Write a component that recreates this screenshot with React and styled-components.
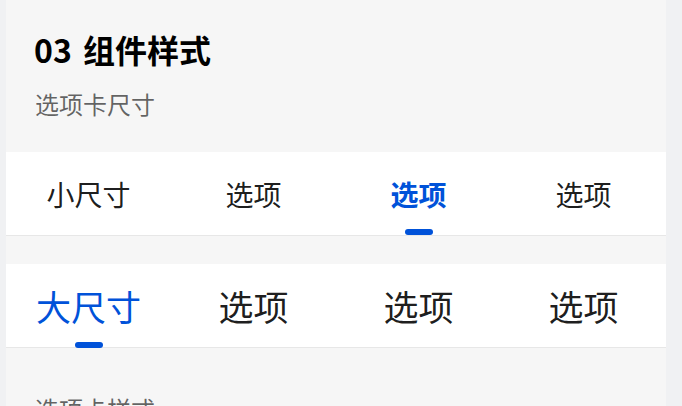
import React from "react";
import styled, { createGlobalStyle } from "styled-components";

const Global = createGlobalStyle`
  html, body { margin: 0; padding: 0; background: #f0f1f3; }
  body { font-family: "Noto Sans CJK SC", "Noto Sans", sans-serif; }
  #root { height: 406px; overflow: hidden; }
`;

const Shell = styled.div`
  display: flex;
  height: 406px;
  padding-left: 6px;
  padding-right: 16px;
`;

const Panel = styled.main`
  flex: 1;
  background: #f6f6f6;
  padding-top: 33px;
  overflow: hidden;
`;

const Title = styled.h1`
  margin: 0;
  padding: 0 28px;
  font-size: 32px;
  line-height: 32px;
  font-weight: 700;
  color: #000;
  word-spacing: 4px;
`;

const Desc = styled.p`
  margin: ${(p) => p.$top}px 0 0;
  padding: 0 29px;
  font-size: 24px;
  line-height: 24px;
  color: rgba(0, 0, 0, 0.6);
`;

const TabBar = styled.div`
  margin-top: ${(p) => p.$top}px;
  display: grid;
  grid-template-columns: repeat(4, 1fr);
  height: 83px;
  background: #fff;
  border-bottom: 1px solid #e7e7e7;
  position: relative;
`;

const Tab = styled.div`
  position: relative;
  display: flex;
  align-items: center;
  justify-content: center;
  font-size: ${(p) => (p.$large ? 35 : 28)}px;
  line-height: 1;
  color: ${(p) => (p.$active ? "#0052d9" : "rgba(0,0,0,0.9)")};
  font-weight: ${(p) => (p.$active && !p.$large ? 600 : 400)};
`;

const Indicator = styled.span`
  position: absolute;
  left: 50%;
  bottom: ${(p) => (p.$large ? -1 : 0)}px;
  width: 28px;
  height: 6px;
  margin-left: -14px;
  border-radius: 3px;
  background: #0052d9;
`;

function Tabs({ items, active, large, top }) {
  return (
    <TabBar $top={top}>
      {items.map((t, i) => (
        <Tab key={i} $active={i === active} $large={large}>
          {t}
          {i === active && <Indicator $large={large} />}
        </Tab>
      ))}
    </TabBar>
  );
}

export default function App() {
  return (
    <>
      <Global />
      <Shell>
        <Panel>
          <Title>03 组件样式</Title>
          <Desc $top={27}>选项卡尺寸</Desc>
          <Tabs top={36} items={["小尺寸", "选项", "选项", "选项"]} active={2} />
          <Tabs top={28} large items={["大尺寸", "选项", "选项", "选项"]} active={0} />
          <Desc $top={49}>选项卡样式</Desc>
        </Panel>
      </Shell>
    </>
  );
}
